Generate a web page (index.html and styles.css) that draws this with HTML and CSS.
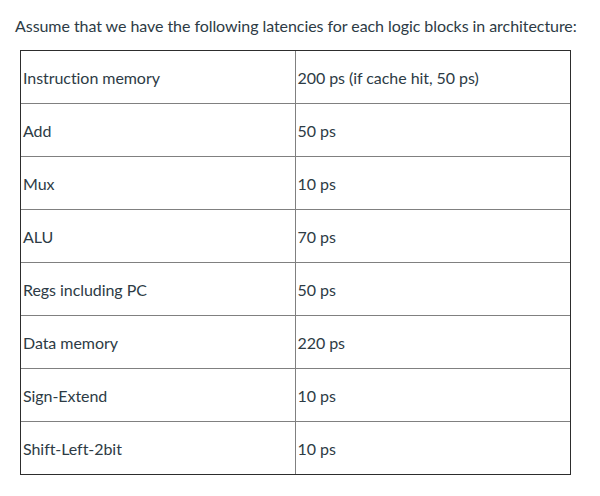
FILE: index.html
```html
<!DOCTYPE html>
<html>
<head>
<meta charset="utf-8">
<link rel="stylesheet" href="styles.css">
</head>
<body>
<div class="content">
  <p class="intro">Assume that we have the following latencies for each logic blocks in architecture:</p>
  <table class="latency">
    <tbody>
      <tr><td>Instruction memory</td><td>200 ps (if cache hit, 50 ps)</td></tr>
      <tr><td>Add</td><td>50 ps</td></tr>
      <tr><td>Mux</td><td>10 ps</td></tr>
      <tr><td>ALU</td><td>70 ps</td></tr>
      <tr><td>Regs including PC</td><td>50 ps</td></tr>
      <tr><td>Data memory</td><td>220 ps</td></tr>
      <tr><td>Sign-Extend</td><td>10 ps</td></tr>
      <tr><td>Shift-Left-2bit</td><td>10 ps</td></tr>
    </tbody>
  </table>
</div>
</body>
</html>
```

FILE: styles.css
```css
html, body {
  margin: 0;
  padding: 0;
  background: #ffffff;
}

.content {
  padding: 14px 0 0 15px;
  font-family: Lato, "Liberation Sans", sans-serif;
  color: #2d3b45;
  letter-spacing: -0.06px;
}

.intro {
  margin: 0 0 12px 0;
  font-size: 16px;
  line-height: 24px;
}

.latency {
  margin-left: 5px;
  width: 551px;
  border: 1px solid #2d2d2d;
  border-spacing: 0;
  table-layout: fixed;
  font-size: 16px;
}

.latency td {
  height: 52px;
  padding: 0 0 0 2px;
  vertical-align: middle;
  border-right: 1px solid #808080;
  border-bottom: 1px solid #808080;
}

.latency td:last-child {
  border-right: none;
}

.latency tr:last-child td {
  border-bottom: none;
}
```
